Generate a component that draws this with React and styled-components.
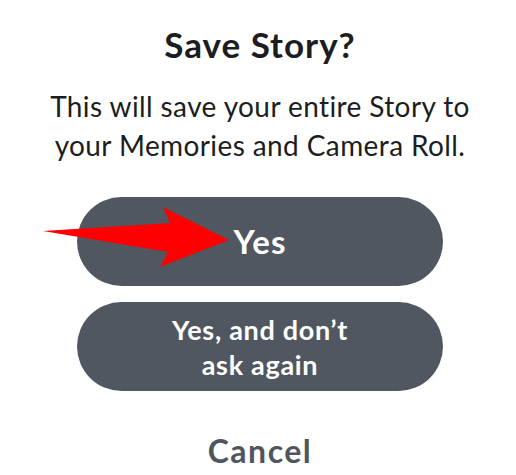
import styled, { createGlobalStyle } from 'styled-components'

const GlobalStyle = createGlobalStyle`
  html, body {
    margin: 0;
    padding: 0;
    background: #ffffff;
  }
  body {
    font-family: Lato, "Open Sans", sans-serif;
  }
`

const Dialog = styled.div`
  width: 516px;
  height: 475px;
  box-sizing: border-box;
  padding-left: 4px;
  display: flex;
  flex-direction: column;
  align-items: center;
  position: relative;
  overflow: hidden;
`

const Title = styled.h1`
  margin: 24px 0 0;
  font-size: 35px;
  line-height: 40px;
  font-weight: 700;
  letter-spacing: 1px;
  color: #1b1d21;
`

const Message = styled.p`
  margin: 23px 0 0;
  font-size: 28px;
  line-height: 39px;
  font-weight: 400;
  letter-spacing: 0.4px;
  color: #1b1d21;
  text-align: center;
`

const Actions = styled.div`
  margin-top: 32px;
  display: flex;
  flex-direction: column;
  gap: 16px;
  width: 366px;
`

const Pill = styled.button`
  height: 89px;
  border: none;
  border-radius: 45px;
  background: #505760;
  color: #ffffff;
  font-family: inherit;
  font-weight: 700;
  font-size: ${p => (p.big ? '33px' : '27px')};
  letter-spacing: ${p => (p.big ? '1px' : '0.7px')};
  line-height: 35px;
  padding: 0 40px;
`

const Cancel = styled.button`
  margin-top: 39px;
  border: none;
  background: none;
  font-family: inherit;
  font-weight: 700;
  font-size: 32px;
  letter-spacing: 1.5px;
  line-height: 40px;
  color: #4f5660;
`

const Arrow = styled.svg`
  position: absolute;
  left: 0;
  top: 0;
  pointer-events: none;
`

export default function App() {
  return (
    <>
      <GlobalStyle />
      <Dialog>
        <Title>Save Story?</Title>
        <Message>
          This will save your entire Story to
          <br />
          your Memories and Camera Roll.
        </Message>
        <Actions>
          <Pill big>Yes</Pill>
          <Pill>
            Yes, and don’t
            <br />
            ask again
          </Pill>
        </Actions>
        <Cancel>Cancel</Cancel>
        <Arrow width="516" height="475" viewBox="0 0 516 475">
          <path
            d="M43 231 L170 223 L163 207 L229 240 L160 267 L168 252 Z"
            fill="#ff0000"
          />
        </Arrow>
      </Dialog>
    </>
  )
}
